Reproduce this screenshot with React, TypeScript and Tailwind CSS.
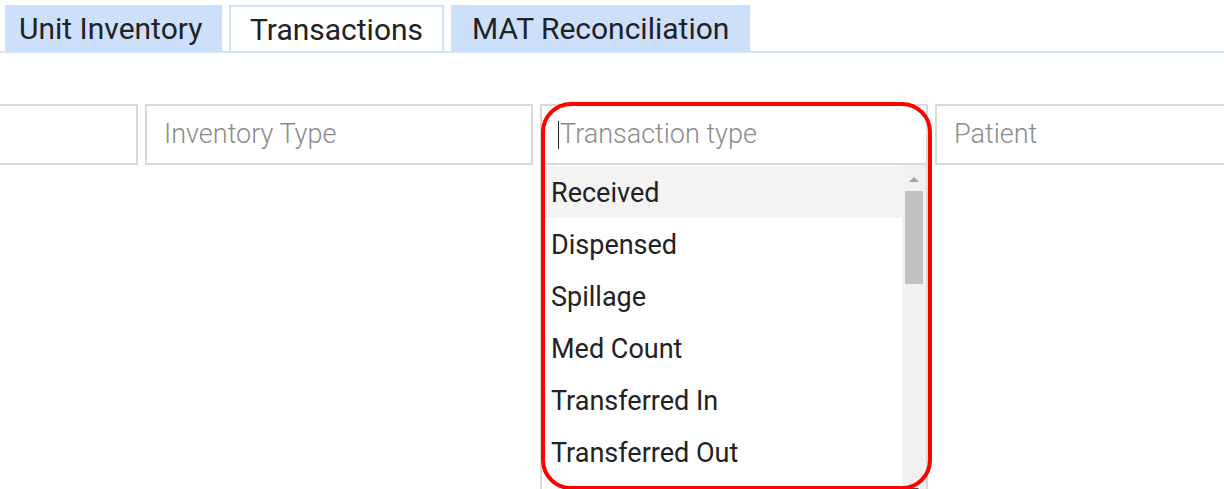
import React from 'react';

const tabs = [
  { label: 'Unit Inventory', active: false, width: 'w-[217px]', pad: 'pl-[14px]' },
  { label: 'Transactions', active: true, width: 'w-[215px]', pad: 'pl-[19px]' },
  { label: 'MAT Reconciliation', active: false, width: 'w-[299px]', pad: 'pl-[21px]' },
];

const options = ['Received', 'Dispensed', 'Spillage', 'Med Count', 'Transferred In', 'Transferred Out'];

const App: React.FC = () => {
  return (
    <div
      className="relative h-[489px] w-[1224px] overflow-hidden bg-white text-[#222]"
      style={{ fontFamily: 'Roboto, "Noto Sans", sans-serif' }}
    >
      {/* Tabs */}
      <div className="flex h-[53px] items-end gap-[7px] border-b-2 border-[#d2e2fa] pl-[5px] pt-[5px]">
        {tabs.map((tab) => (
          <div
            key={tab.label}
            className={`flex h-[46px] shrink-0 items-center text-[30px] ${tab.width} ${tab.pad} ${
              tab.active ? 'border-2 border-b-0 border-[#d2e2fa] bg-white' : 'bg-[#cde0fb]'
            }`}
          >
            {tab.label}
          </div>
        ))}
      </div>

      {/* Filter row */}
      <div className="mt-[51px] flex gap-[7px]">
        <div className="h-[61px] w-[138px] shrink-0 border-y-2 border-r-2 border-[#d9d9d9]" />
        <div className="flex h-[61px] w-[388px] shrink-0 items-center border-2 border-[#d9d9d9] pl-[17px] text-[27px] font-light text-[#8c8c8c]">
          Inventory Type
        </div>
        <div className="relative w-[388px] shrink-0">
          <div className="flex h-[61px] items-center border-2 border-[#d9d9d9] pl-[16px] text-[27px] font-light text-[#8c8c8c]">
            <span className="mr-px h-[28px] w-px bg-[#222]" />
            Transaction type
          </div>

          {/* Dropdown list */}
          <div className="absolute left-0 top-full flex h-[330px] w-full border-x-2 border-[#d9d9d9] bg-white">
            <ul className="flex-1 pt-[1px]">
              {options.map((opt, i) => (
                <li
                  key={opt}
                  className={`flex h-[52px] items-center pl-[9px] pt-[2px] text-[27px] ${i === 0 ? 'bg-[#f3f3f3]' : ''}`}
                >
                  {opt}
                </li>
              ))}
            </ul>
            <div className="flex w-[24px] flex-col items-center bg-[#f1f1f1] pt-[12px]">
              <span className="h-0 w-0 border-x-[5px] border-b-[5px] border-x-transparent border-b-[#a3a3a3]" />
              <div className="mt-[9px] h-[93px] w-[18px] bg-[#c1c1c1]" />
              <div className="flex-1" />
              <span className="mb-[2px] h-0 w-0 border-x-[5px] border-t-[5px] border-x-transparent border-t-[#505050]" />
            </div>
          </div>

          {/* Red highlight */}
          <div className="pointer-events-none absolute left-[1px] top-[-2px] h-[388px] w-[391px] rounded-[30px] border-4 border-[#ff0000]" />
        </div>
        <div className="flex h-[61px] w-[300px] shrink-0 items-center border-y-2 border-l-2 border-[#d9d9d9] pl-[17px] text-[27px] font-light text-[#8c8c8c]">
          Patient
        </div>
      </div>
    </div>
  );
};

export default App;
